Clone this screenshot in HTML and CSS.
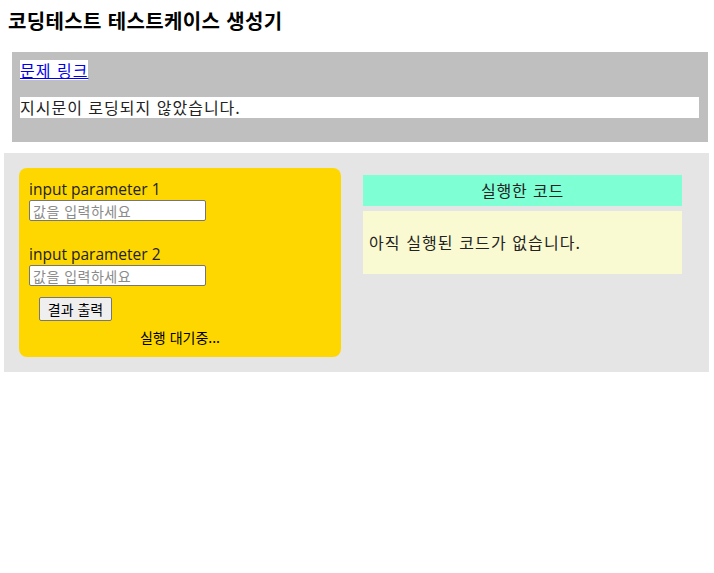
FILE: index.html
```html
<!DOCTYPE html>
<html lang="ko">
<head>
<meta charset="utf-8">
<title>코딩테스트 테스트케이스 생성기</title>
<link rel="stylesheet" href="styles.css">
</head>
<body>
<h1 class="title">코딩테스트 테스트케이스 생성기</h1>
<section class="problem">
  <a class="problem-link" href="#">문제 링크</a>
  <p class="problem-text">지시문이 로딩되지 않았습니다.</p>
</section>
<main class="workspace">
  <div class="card">
    <label class="param-label">input parameter 1</label>
    <input class="param-input" type="text" placeholder="값을 입력하세요">
    <label class="param-label second">input parameter 2</label>
    <input class="param-input" type="text" placeholder="값을 입력하세요">
    <div class="actions"><button class="run-btn">결과 출력</button></div>
    <div class="status">실행 대기중...</div>
  </div>
  <div class="code-panel">
    <div class="code-head">실행한 코드</div>
    <div class="code-body">아직 실행된 코드가 없습니다.</div>
  </div>
</main>
</body>
</html>
```
FILE: styles.css
```css
body {
  margin: 0;
  font-family: "Noto Sans CJK KR", "Noto Sans", sans-serif;
  color: #000;
  background: #fff;
}
.title {
  margin: 0;
  padding: 7px 8px 0;
  height: 45px;
  box-sizing: border-box;
  font-size: 20px;
  line-height: 28px;
  font-weight: 700;
  letter-spacing: 0.35px;
}
.problem {
  margin: 7px 6px 0 12px;
  padding: 8px 9px 24px 8px;
  background: #bfbfbf;
}
.problem-link {
  display: block;
  width: fit-content;
  background: #fff;
  color: #0000ee;
  font-size: 16px;
  line-height: 20px;
  letter-spacing: 1px;
}
.problem-text {
  margin: 17px 0 0;
  background: #fff;
  font-size: 16px;
  line-height: 21px;
  letter-spacing: 1px;
  color: #222;
}
.workspace {
  margin: 11px 5px 0 4px;
  padding: 15px 27px 15px 15px;
  background: #e5e5e5;
  display: flex;
  align-items: flex-start;
  gap: 22px;
}
.card {
  width: 322px;
  height: 189px;
  box-sizing: border-box;
  background: #ffd700;
  border-radius: 8px;
  padding: 12px 10px 0;
  display: flex;
  flex-direction: column;
  align-items: flex-start;
}
.param-label {
  font-family: "Open Sans", "Noto Sans CJK KR", sans-serif;
  font-size: 15.5px;
  line-height: 21px;
  color: #222;
  margin-top: -1px;
}
.param-label.second {
  margin-top: 23px;
}
.param-input {
  width: 177px;
  height: 21px;
  box-sizing: border-box;
  margin: 0;
  padding: 1px 3px;
  border: 1px solid #767676;
  border-radius: 2px;
  font-family: "Noto Sans CJK KR", sans-serif;
  font-size: 14px;
  letter-spacing: 0.5px;
  background: #fff;
}
.param-input::placeholder {
  color: #8a8a8a;
}
.actions {
  margin: 10px 0 0 10px;
}
.run-btn {
  width: 73px;
  height: 24px;
  padding: 0;
  border: 1px solid #767676;
  border-radius: 2px;
  background: #efefef;
  font-family: "Noto Sans CJK KR", sans-serif;
  font-size: 14px;
  color: #000;
}
.status {
  align-self: stretch;
  text-align: center;
  margin-top: 6px;
  font-size: 14px;
  line-height: 20px;
}
.code-panel {
  width: 319px;
  margin-top: 7px;
  display: flex;
  flex-direction: column;
  gap: 5px;
}
.code-head {
  height: 31px;
  background: #7fffd4;
  text-align: center;
  font-size: 16px;
  line-height: 31px;
  letter-spacing: 0.8px;
  color: #222;
}
.code-body {
  height: 63px;
  box-sizing: border-box;
  background: #fafad2;
  padding: 0 6px;
  font-size: 16px;
  line-height: 63px;
  letter-spacing: 1.1px;
  color: #222;
}
```
